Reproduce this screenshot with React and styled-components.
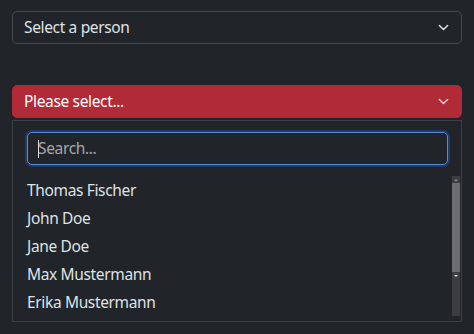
import React from 'react';
import styled, { createGlobalStyle } from 'styled-components';

const people = ['Thomas Fischer', 'John Doe', 'Jane Doe', 'Max Mustermann', 'Erika Mustermann'];

const Chevron = ({ color }) => (
  <svg width="11" height="11" viewBox="0 0 16 16" fill="none">
    <path d="M2 5l6 6 6-6" stroke={color} strokeWidth="2.2" strokeLinecap="round" strokeLinejoin="round" />
  </svg>
);

const App = () => {
  return (
    <>
      <GlobalStyle />
      <Page>
        <Select>
          <span>Select a person</span>
          <Chevron color="#dee2e6" />
        </Select>
        <Spacer />
        <Select $danger>
          <span>Please select...</span>
          <Chevron color="#f4c6cb" />
        </Select>
        <Panel>
          <SearchBox>
            <Caret />
            <SearchInput placeholder="Search..." readOnly />
          </SearchBox>
          <ListRow>
            <Items>
              {people.map((name) => (
                <Item key={name}>{name}</Item>
              ))}
            </Items>
            <ScrollTrack>
              <ScrollArrow $up />
              <ScrollThumb />
              <ScrollArrow />
            </ScrollTrack>
          </ListRow>
        </Panel>
      </Page>
    </>
  );
};

// START = STYLING
const GlobalStyle = createGlobalStyle`
  html, body {
    margin: 0;
    background: #212529;
    color: #dee2e6;
    font-family: "Noto Sans", "Open Sans", sans-serif;
  }
`;

const Page = styled.div`
  padding: 11px 12px 12px;
  display: flex;
  flex-direction: column;
`;

const Spacer = styled.div`
  height: 41px;
`;

const Select = styled.div`
  height: 33px;
  box-sizing: border-box;
  display: flex;
  align-items: center;
  justify-content: space-between;
  padding: 0 12px 0 11px;
  border-radius: 5px;
  border: 1px solid ${(p) => (p.$danger ? '#b02a37' : '#464b51')};
  background: ${(p) => (p.$danger ? '#b02a37' : '#212529')};
  color: ${(p) => (p.$danger ? '#ffffff' : '#dee2e6')};
  font-size: 15.5px;
  letter-spacing: -0.35px;
  span {
    padding-bottom: 1px;
  }
`;

const Panel = styled.div`
  margin-top: 2px;
  border: 1px solid #3a3f44;
  padding: 11px 0 5px 0;
  display: flex;
  flex-direction: column;
`;

const SearchBox = styled.div`
  position: relative;
  margin: 0 13px 0 14px;
  height: 33px;
  box-sizing: border-box;
  border: 1px solid #5a8ad0;
  border-radius: 5px;
  box-shadow: 0 0 0 2px #1d3c6b;
  display: flex;
  align-items: center;
  padding-left: 10px;
`;

const Caret = styled.span`
  position: absolute;
  left: 10px;
  top: 7px;
  width: 1px;
  height: 18px;
  background: #dee2e6;
`;

const SearchInput = styled.input`
  border: none;
  outline: none;
  background: transparent;
  color: #dee2e6;
  font-family: inherit;
  font-size: 15.5px;
  letter-spacing: -0.35px;
  padding: 0 0 1px;
  width: 100%;
  &::placeholder {
    color: #a3a8ad;
  }
`;

const ListRow = styled.div`
  margin-top: 11px;
  height: 140px;
  display: flex;
`;

const Items = styled.div`
  flex: 1;
  display: flex;
  flex-direction: column;
`;

const Item = styled.div`
  height: 28px;
  display: flex;
  align-items: center;
  padding-left: 14px;
  font-size: 15.5px;
  letter-spacing: -0.35px;
  color: #dee2e6;
`;

const ScrollTrack = styled.div`
  width: 8px;
  margin-right: 1px;
  background: #3b3d40;
  display: flex;
  flex-direction: column;
`;

const ScrollArrow = styled.div`
  height: 7px;
  display: flex;
  align-items: center;
  justify-content: center;
  &::after {
    content: '';
    width: 0;
    height: 0;
    border-left: 2px solid transparent;
    border-right: 2px solid transparent;
    ${(p) => (p.$up ? 'border-bottom: 2px solid #8a8c8f;' : 'border-top: 2px solid #e8e8e8;')}
  }
`;

const ScrollThumb = styled.div`
  height: 89px;
  background: #6b6d70;
`;

export default App;
